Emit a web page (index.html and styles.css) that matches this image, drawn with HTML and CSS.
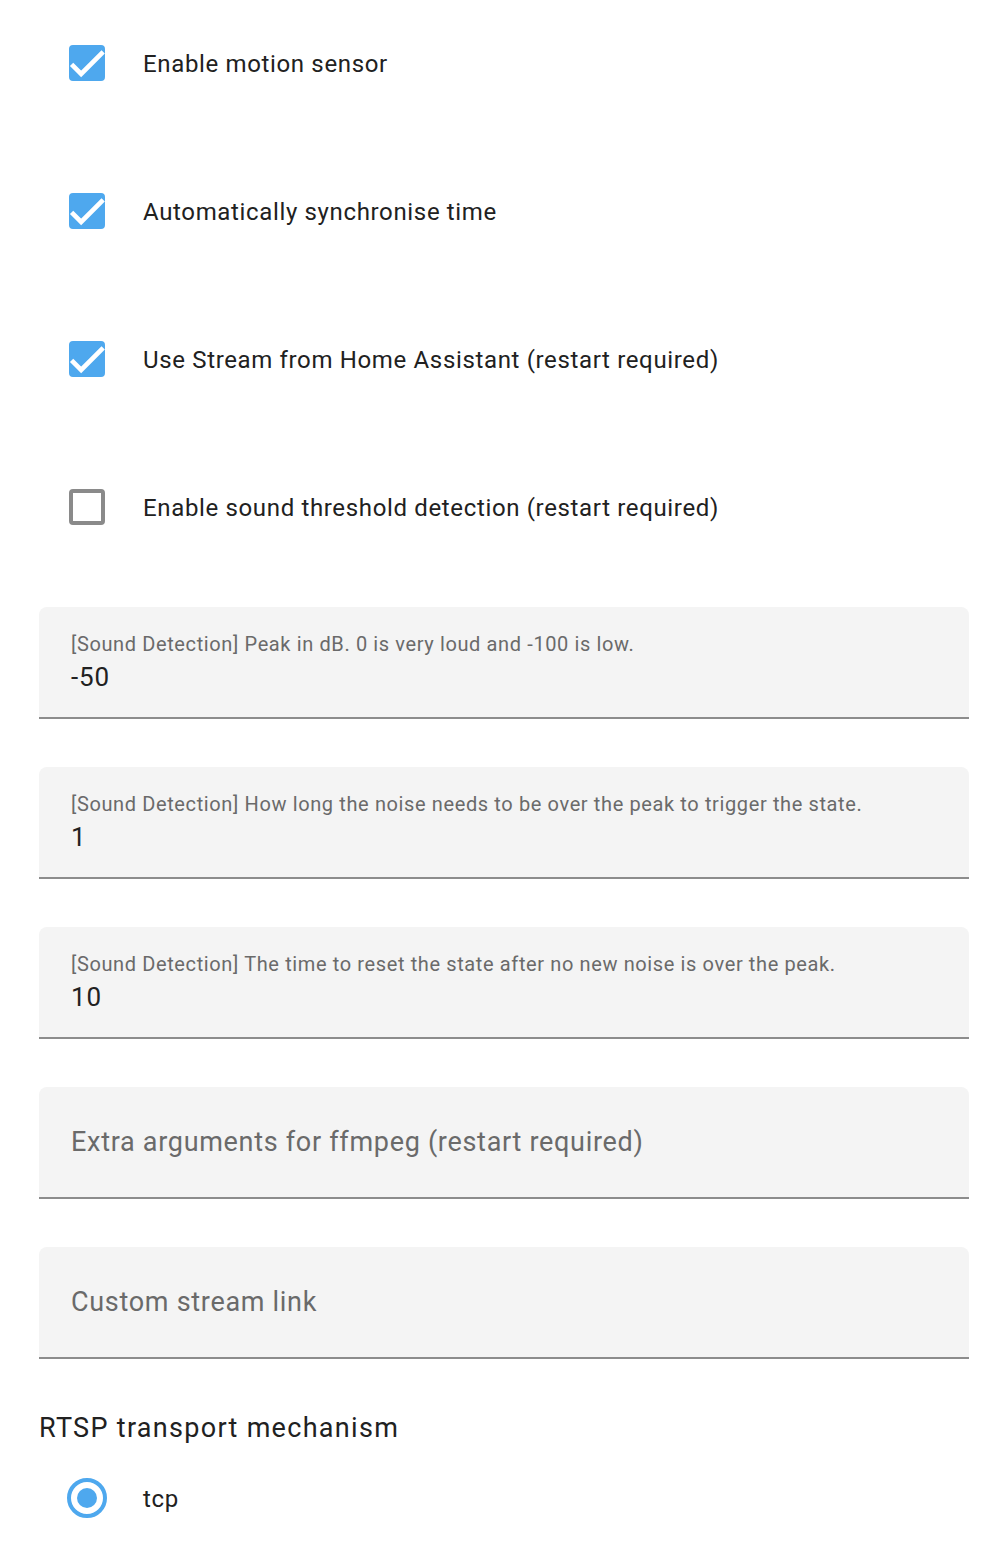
FILE: index.html
```html
<html lang="en">
<head>
    <meta charset="UTF-8">
    <meta name="viewport" content="width=device-width, initial-scale=1.0">
    <title>Camera options</title>
    <link rel="stylesheet" href="styles.css">
</head>
<body>
    <div class="options">
        <div class="checkbox-list">
            <label class="check-row">
                <span class="checkbox checked">
                    <svg viewBox="0 0 24 24"><path d="M1.73,12.91 8.1,19.28 22.79,4.59"/></svg>
                </span>
                <span class="check-label">Enable motion sensor</span>
            </label>
            <label class="check-row">
                <span class="checkbox checked">
                    <svg viewBox="0 0 24 24"><path d="M1.73,12.91 8.1,19.28 22.79,4.59"/></svg>
                </span>
                <span class="check-label">Automatically synchronise time</span>
            </label>
            <label class="check-row">
                <span class="checkbox checked">
                    <svg viewBox="0 0 24 24"><path d="M1.73,12.91 8.1,19.28 22.79,4.59"/></svg>
                </span>
                <span class="check-label">Use Stream from Home Assistant (restart required)</span>
            </label>
            <label class="check-row">
                <span class="checkbox"></span>
                <span class="check-label">Enable sound threshold detection (restart required)</span>
            </label>
        </div>

        <div class="fields">
            <div class="textfield filled">
                <span class="field-label">[Sound Detection] Peak in dB. 0 is very loud and -100 is low.</span>
                <span class="field-value">-50</span>
            </div>
            <div class="textfield filled">
                <span class="field-label">[Sound Detection] How long the noise needs to be over the peak to trigger the state.</span>
                <span class="field-value">1</span>
            </div>
            <div class="textfield filled">
                <span class="field-label">[Sound Detection] The time to reset the state after no new noise is over the peak.</span>
                <span class="field-value">10</span>
            </div>
            <div class="textfield">
                <span class="field-placeholder">Extra arguments for ffmpeg (restart required)</span>
            </div>
            <div class="textfield">
                <span class="field-placeholder">Custom stream link</span>
            </div>
        </div>

        <div class="radio-group">
            <div class="group-title">RTSP transport mechanism</div>
            <label class="radio-row">
                <span class="radio checked"><span class="dot"></span></span>
                <span class="check-label">tcp</span>
            </label>
        </div>
    </div>
</body>
</html>
```

FILE: styles.css
```css
:root {
    --primary: #4ea8ee;
    --text: #212121;
    --muted: #6a6a6a;
    --field-bg: #f4f4f4;
}

body {
    margin: 0;
    background: #fff;
    font-family: Roboto, "Noto Sans", sans-serif;
    color: var(--text);
}

.options {
    padding: 0 33px 0 39px;
}

.checkbox-list {
    display: flex;
    flex-direction: column;
    gap: 22px;
}

.check-row {
    height: 126px;
    display: flex;
    align-items: center;
    padding-left: 30px;
}

.checkbox {
    width: 36px;
    height: 36px;
    box-sizing: border-box;
    border: 4px solid #8a8a8a;
    border-radius: 4px;
    flex-shrink: 0;
    display: flex;
    align-items: center;
    justify-content: center;
}

.checkbox.checked {
    background: var(--primary);
    border-color: var(--primary);
}

.checkbox svg {
    width: 36px;
    height: 36px;
    flex-shrink: 0;
}

.checkbox path {
    fill: none;
    stroke: #fff;
    stroke-width: 3.12;
}

.check-label {
    margin-left: 38px;
    font-size: 24px;
    letter-spacing: 0.65px;
    line-height: 1;
    padding-top: 2px;
}

.fields {
    margin-top: 37px;
    display: flex;
    flex-direction: column;
    gap: 48px;
}

.textfield {
    box-sizing: border-box;
    height: 112px;
    background: var(--field-bg);
    border-bottom: 2px solid #8c8c8c;
    border-radius: 8px 8px 0 0;
    padding: 0 32px;
    display: flex;
    flex-direction: column;
    justify-content: center;
}

.textfield.filled {
    justify-content: flex-start;
    padding-top: 24px;
}

.field-label {
    font-size: 20px;
    color: var(--muted);
    line-height: 26px;
    letter-spacing: 0.62px;
}

.field-value {
    font-size: 26px;
    line-height: 30px;
    margin-top: 5px;
    letter-spacing: 0.8px;
    color: var(--text);
}

.field-placeholder {
    font-size: 27px;
    color: var(--muted);
    letter-spacing: 0.7px;
}

.radio-group {
    margin-top: 51px;
}

.group-title {
    font-size: 27px;
    letter-spacing: 1.3px;
    line-height: 36px;
}

.radio-row {
    height: 104px;
    display: flex;
    align-items: center;
    padding-left: 28px;
}

.radio {
    width: 40px;
    height: 40px;
    box-sizing: border-box;
    border: 4px solid var(--primary);
    border-radius: 50%;
    display: flex;
    align-items: center;
    justify-content: center;
    flex-shrink: 0;
}

.radio .dot {
    width: 20px;
    height: 20px;
    border-radius: 50%;
    background: var(--primary);
}

.radio-row .check-label {
    margin-left: 36px;
}
```
